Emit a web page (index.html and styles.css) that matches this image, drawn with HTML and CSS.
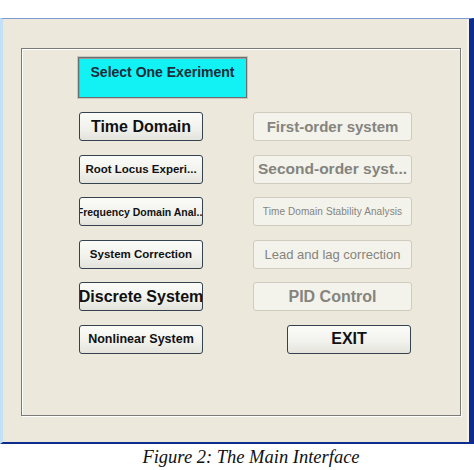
FILE: index.html
```html
<!DOCTYPE html>
<html>
<head>
<meta charset="utf-8">
<link rel="stylesheet" href="styles.css">
</head>
<body>
<div class="page">
  <div class="topgap"></div>
  <div class="window">
    <div class="group">
      <div class="title">Select One Exeriment</div>
      <div class="grid">
        <div class="btn f16">Time Domain</div>
        <div class="btn off f15">First-order system</div>
        <div class="btn f115">Root Locus Experi...</div>
        <div class="btn off f155">Second-order syst...</div>
        <div class="btn f105">Frequency Domain Anal...</div>
        <div class="btn off f10 reg wide">Time Domain Stability Analysis</div>
        <div class="btn f115">System Correction</div>
        <div class="btn off f13 reg">Lead and lag correction</div>
        <div class="btn f16">Discrete System</div>
        <div class="btn off f16">PID Control</div>
        <div class="btn f125">Nonlinear System</div>
        <div class="btn f16 exit">EXIT</div>
      </div>
    </div>
  </div>
  <div class="caption">Figure 2: The Main Interface</div>
</div>
</body>
</html>
```

FILE: styles.css
```css
html, body {
  margin: 0;
  padding: 0;
  background: #ffffff;
}
.page {
  width: 474px;
  height: 470px;
  display: flex;
  flex-direction: column;
  font-family: "Liberation Sans", Arial, sans-serif;
}
.topgap {
  height: 18px;
}
.window {
  box-sizing: border-box;
  height: 426px;
  background: #ece9dc;
  border-top: 1px solid #7d9ad2;
  border-left: 3px solid #c4e0f8;
  border-right: 5px solid #0c2c8e;
  border-bottom: 2px solid #0c2c8e;
  box-shadow: inset -2px 0 0 #f4f2ea;
  padding-top: 29px;
}
.group {
  box-sizing: border-box;
  margin-left: 18px;
  width: 440px;
  height: 368px;
  border: 1px solid #7a7a78;
  box-shadow: inset 1px 1px 0 #ffffff, 1px 1px 0 #ffffff;
  padding-top: 8px;
  padding-left: 56px;
}
.title {
  box-sizing: border-box;
  width: 169px;
  height: 41px;
  background: #12f2f4;
  border: 1px solid #6e6e6e;
  box-shadow: 0 0 0 1px #c9c6bb, inset 1px 1px 0 #9a9a9a;
  display: flex;
  align-items: center;
  justify-content: center;
  padding-bottom: 11px;
  font-weight: bold;
  font-size: 14px;
  color: #1c2c3a;
}
.grid {
  margin-top: 14px;
  margin-left: 1px;
  display: grid;
  grid-template-columns: 124px 159px;
  grid-auto-rows: 29px;
  column-gap: 50px;
  row-gap: 13.6px;
}
.btn {
  box-sizing: border-box;
  border: 1px solid #34434f;
  border-radius: 3px;
  background: linear-gradient(#fbfbf8, #f1f1ec 60%, #e3e3dc);
  display: flex;
  align-items: center;
  justify-content: center;
  white-space: nowrap;
  overflow: hidden;
  font-weight: bold;
  color: #111111;
}
.btn.off {
  border-color: #cfcbbf;
  background: #f3f2eb;
  color: #85847d;
}
.btn.reg {
  font-weight: normal;
}
.btn.wide {
  letter-spacing: 0.1px;
}
.btn.exit {
  width: 124px;
  margin-left: 34px;
  color: #111111;
}
.f16 { font-size: 16px; }
.f155 { font-size: 15.5px; }
.f15 { font-size: 15px; }
.f13 { font-size: 13px; }
.f125 { font-size: 12.5px; }
.f115 { font-size: 11.5px; }
.f105 { font-size: 10.5px; }
.f10 { font-size: 10px; }
.caption {
  font-family: "Liberation Serif", "Times New Roman", serif;
  font-style: italic;
  font-size: 18.5px;
  color: #111111;
  text-align: center;
  padding-left: 28px;
  margin-top: 3px;
}
```
